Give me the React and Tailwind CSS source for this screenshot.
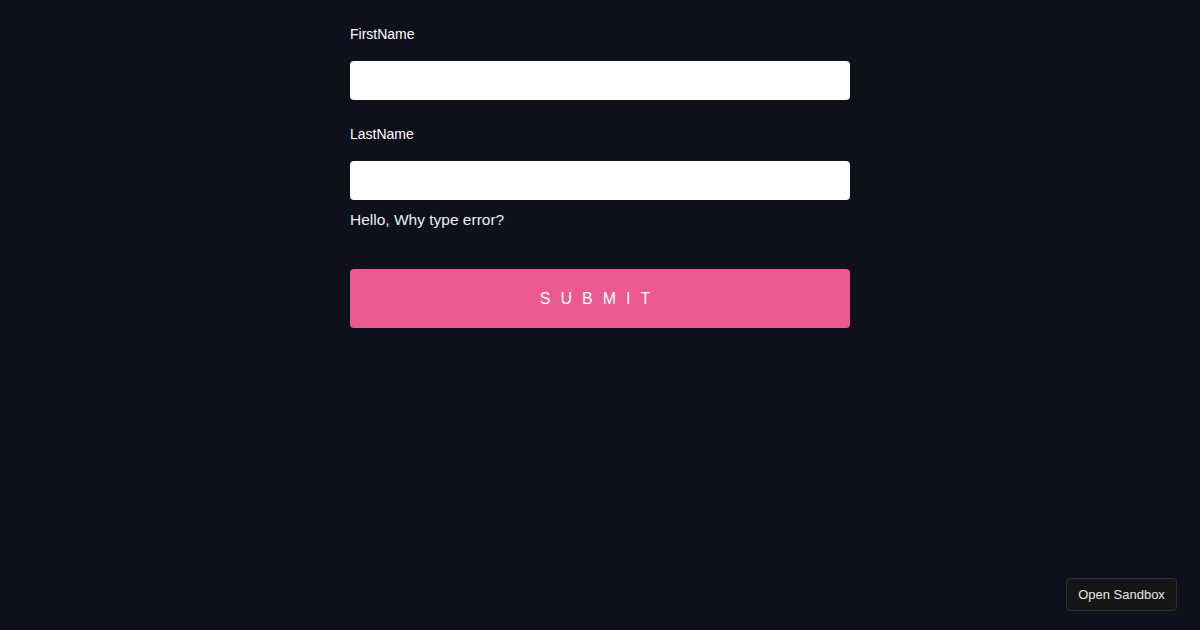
export default function App() {
  return (
    <div className="relative min-h-[630px] w-full bg-[#0e101c] font-['Liberation_Sans',Arial,sans-serif] text-white">
      <form className="mx-auto flex max-w-[500px] flex-col" onSubmit={(e) => e.preventDefault()}>
        <label className="mt-5 mb-[13px] block text-[14px] leading-[28px] font-extralight text-white">FirstName</label>
        <input className="block h-[39px] w-full rounded bg-white px-[15px] text-[14px] text-black outline-none" />
        <label className="mt-5 mb-[13px] block text-[14px] leading-[28px] font-extralight text-white">LastName</label>
        <input className="block h-[39px] w-full rounded bg-white px-[15px] text-[14px] text-black outline-none" />
        <p className="mt-[10px] text-[15.5px] leading-[19px] text-[#ededed]">Hello, Why type error?</p>
        <button
          type="submit"
          className="mt-10 h-[59px] w-full rounded bg-[#ec5990] text-[16px] font-thin uppercase tracking-[10px] text-white"
        >
          Submit
        </button>
      </form>
      <button className="absolute right-[23px] bottom-[19px] h-[33px] w-[111px] rounded border border-[#2f2f2f] bg-[#151515] text-[13px] text-[#e6e6e6]">
        Open Sandbox
      </button>
    </div>
  );
}
